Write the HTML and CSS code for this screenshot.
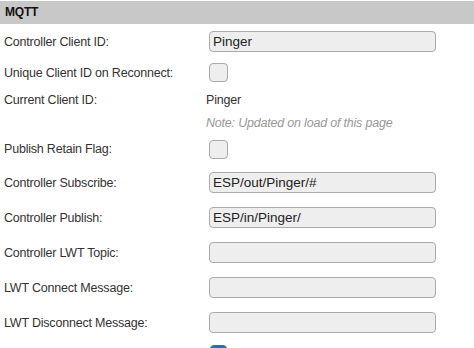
FILE: index.html
```html
<!doctype html>
<html lang="en">
  <head>
    <meta charset="UTF-8" />
    <meta name="viewport" content="width=device-width, initial-scale=1.0" />
    <title>MQTT</title>
    <link rel="stylesheet" href="styles.css">
  </head>
  <body>
    <div class="section">
      <div class="section-head">MQTT</div>

      <div class="row row-input">
        <div class="label">Controller Client ID:</div>
        <div class="value"><input class="wide" type="text" value="Pinger" /></div>
      </div>

      <div class="row row-check">
        <div class="label">Unique Client ID on Reconnect:</div>
        <div class="value"><span class="checkbox"></span></div>
      </div>

      <div class="row row-text">
        <div class="label">Current Client ID:</div>
        <div class="value">Pinger</div>
      </div>

      <div class="row row-note">
        <div class="label"></div>
        <div class="value note">Note: Updated on load of this page</div>
      </div>

      <div class="row row-check2">
        <div class="label">Publish Retain Flag:</div>
        <div class="value"><span class="checkbox"></span></div>
      </div>

      <div class="row row-input">
        <div class="label">Controller Subscribe:</div>
        <div class="value"><input class="wide" type="text" value="ESP/out/Pinger/#" /></div>
      </div>

      <div class="row row-input">
        <div class="label">Controller Publish:</div>
        <div class="value"><input class="wide" type="text" value="ESP/in/Pinger/" /></div>
      </div>

      <div class="row row-input">
        <div class="label">Controller LWT Topic:</div>
        <div class="value"><input class="wide" type="text" value="" /></div>
      </div>

      <div class="row row-input">
        <div class="label">LWT Connect Message:</div>
        <div class="value"><input class="wide" type="text" value="" /></div>
      </div>

      <div class="row row-input">
        <div class="label">LWT Disconnect Message:</div>
        <div class="value"><input class="wide" type="text" value="" /></div>
      </div>

      <div class="row row-last">
        <div class="label"></div>
        <div class="value"><span class="checkbox checked"></span></div>
      </div>
    </div>
  </body>
</html>
```

FILE: styles.css
```css
* {
  margin: 0;
  padding: 0;
  box-sizing: border-box;
}

html,
body {
  overflow: hidden;
}

body {
  font-family: "Liberation Sans", Arial, sans-serif;
  font-size: 12.5px;
  letter-spacing: -0.2px;
  color: #333;
  background: #fff;
  padding-top: 1px;
}

.section-head {
  background: #c8c8c8;
  color: #111;
  font-weight: bold;
  font-size: 12px;
  height: 23px;
  line-height: 23px;
  padding-left: 5px;
}

.row {
  display: flex;
  align-items: center;
}

.label {
  width: 205px;
  padding-left: 4px;
  flex-shrink: 0;
}

.value {
  flex: 1;
  padding-left: 1px;
}

.row-input {
  height: 35px;
}

.row-check {
  height: 27px;
}

.row-text {
  height: 27px;
}

.row-note {
  height: 20px;
}

.row-check2 {
  height: 32px;
}

.row-last {
  height: 24px;
  align-items: flex-start;
  padding-top: 5px;
}

input.wide {
  display: block;
  width: 227px;
  height: 21px;
  margin-left: 3px;
  padding: 0 3px;
  font-family: inherit;
  font-size: 13.5px;
  letter-spacing: 0;
  color: #222;
  background: #eee;
  border: 1px solid #aaa;
  border-radius: 4px;
}

.checkbox {
  display: block;
  width: 19px;
  height: 19px;
  margin-left: 3px;
  background: #eee;
  border: 1px solid #aaa;
  border-radius: 4px;
}

.checkbox.checked {
  width: 17px;
  height: 17px;
  margin-left: 4px;
  background: #2a6fb3;
  border-color: #2a6fb3;
}

.note {
  font-style: italic;
  color: #999;
}
```
